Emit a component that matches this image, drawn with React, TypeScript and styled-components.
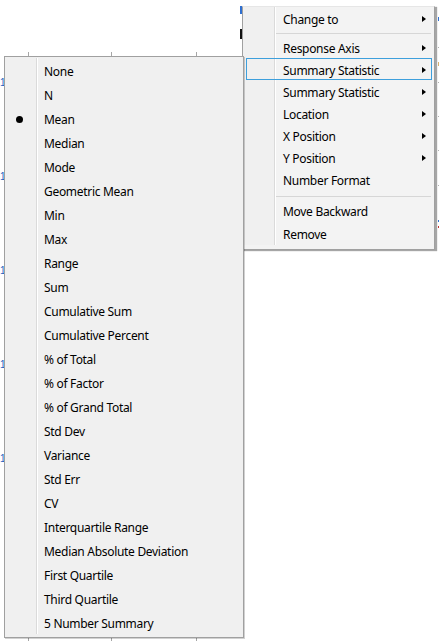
import React from "react";
import styled, { createGlobalStyle } from "styled-components";

const GlobalStyle = createGlobalStyle`
  html, body { margin: 0; padding: 0; background: #ffffff; }
  body { font-family: "Noto Sans", "Liberation Sans", sans-serif; }
`;

const Canvas = styled.div`
  position: relative;
  width: 439px;
  height: 641px;
  background: #ffffff;
  overflow: hidden;
  display: flex;
`;

/* ---------- backdrop chart (behind the menus) ---------- */
const AxisStrip = styled.div`
  width: 4px;
  flex: none;
  display: flex;
  flex-direction: column;
  gap: 82px;
  padding-top: 77px;
`;

const AxisLabel = styled.div`
  height: 12px;
  font-family: "Liberation Sans", sans-serif;
  font-size: 10px;
  line-height: 12px;
  color: #1f5fc0;
  white-space: nowrap;
`;

const PlotArea = styled.div`
  flex: 1;
  display: flex;
  flex-direction: column;
`;

const TitleStrip = styled.div`
  height: 52px;
  flex: none;
  padding-left: 236px;
  display: flex;
  flex-direction: column;
  box-sizing: border-box;
`;

const BlueTick = styled.div`
  width: 2px;
  height: 8px;
  margin-top: 6px;
  background: #2f6fd0;
`;

const TitleMark = styled.div`
  width: 2px;
  height: 10px;
  margin-top: 15px;
  background: #111;
`;

const GridZone = styled.div`
  flex: 1;
  background: linear-gradient(
    90deg,
    transparent 0 24px,
    #a6a6a6 24px 25px,
    transparent 25px 107px,
    #a6a6a6 107px 108px,
    transparent 108px 192px,
    #a6a6a6 192px 193px,
    transparent 193px
  );
`;

const EdgeStrip = styled.div`
  width: 1px;
  flex: none;
  background: linear-gradient(
    180deg,
    #ffffff 0 17px,
    #2f6fd0 17px 21px,
    #ffffff 21px 47px,
    #b0b0b0 47px 48px,
    #ffffff 48px 62px,
    #d8b070 62px 66px,
    #ffffff 66px 82px,
    #b0b0b0 82px 83px,
    #ffffff 83px 116px,
    #b0b0b0 116px 117px,
    #ffffff 117px 150px,
    #b0b0b0 150px 151px,
    #ffffff 151px 185px,
    #b0b0b0 185px 186px,
    #ffffff 186px 220px,
    #2f6fd0 220px 222px,
    #ffffff 222px 226px,
    #c03030 226px 228px,
    #ffffff 228px
  );
`;

/* ---------- menus ---------- */
const ContextMenu = styled.div`
  position: absolute;
  left: 242px;
  top: 6px;
  width: 193px;
  height: 244px;
  box-sizing: border-box;
  border: 1px solid #a0a0a0;
  border-top-color: #e6e6e6;
  background: #f3f3f3;
  box-shadow: 2px 1px 1px rgba(0, 0, 0, 0.35);
  padding: 0 0 4px 0;
  display: flex;
  flex-direction: column;
  z-index: 1;
`;

const SubMenu = styled.div`
  position: absolute;
  left: 4px;
  top: 56px;
  width: 240px;
  height: 582px;
  box-sizing: border-box;
  border: 1px solid #a0a0a0;
  background: #f0f0f0;
  box-shadow: 1px 1px 0 rgba(0, 0, 0, 0.18);
  padding: 1px 0 3px 0;
  display: flex;
  flex-direction: column;
  z-index: 2;
`;

const MenuList = styled.div<{ $bg: string }>`
  flex: 1;
  display: flex;
  flex-direction: column;
  background: linear-gradient(
    90deg,
    #f0f0f0 0 31px,
    #dadada 31px 32px,
    #ffffff 32px 33px,
    ${(p) => p.$bg} 33px
  );
`;

const Row = styled.div<{ $h: number; $active?: boolean }>`
  height: ${(p) => p.$h}px;
  flex: none;
  box-sizing: border-box;
  display: flex;
  align-items: center;
  margin: 0 2px 0 3px;
  padding: 0 5px 0 36px;
  border: 1px solid ${(p) => (p.$active ? "#3d9fdc" : "transparent")};
`;

const StatRow = styled.div`
  height: 24px;
  flex: none;
  display: flex;
  align-items: center;
`;

const CheckCell = styled.div`
  width: 39px;
  flex: none;
  box-sizing: border-box;
  padding: 2px 0 0 11px;
  display: flex;
  align-items: center;
`;

const Bullet = styled.span`
  width: 7px;
  height: 7px;
  border-radius: 50%;
  background: #000;
`;

const Label = styled.span`
  flex: 1;
  font-family: "Noto Sans", "Liberation Sans", sans-serif;
  font-size: 12px;
  letter-spacing: -0.3px;
  color: #000;
  white-space: nowrap;
  padding-top: 2px;
`;

const Arrow = styled.span`
  width: 0;
  height: 0;
  margin-top: 2px;
  border-left: 4px solid #000;
  border-top: 3.5px solid transparent;
  border-bottom: 3.5px solid transparent;
`;

const Separator = styled.div<{ $top: number; $bottom: number }>`
  height: 1px;
  flex: none;
  background: #d6d6d6;
  margin: ${(p) => p.$top}px 3px ${(p) => p.$bottom}px 33px;
`;

type TopItem =
  | { kind: "item"; label: string; sub?: boolean; active?: boolean; h: number }
  | { kind: "sep"; top: number; bottom: number };

const topItems: TopItem[] = [
  { kind: "item", label: "Change to", sub: true, h: 22 },
  { kind: "sep", top: 4, bottom: 2 },
  { kind: "item", label: "Response Axis", sub: true, h: 22 },
  { kind: "item", label: "Summary Statistic", sub: true, active: true, h: 22 },
  { kind: "item", label: "Summary Statistic", sub: true, h: 22 },
  { kind: "item", label: "Location", sub: true, h: 22 },
  { kind: "item", label: "X Position", sub: true, h: 22 },
  { kind: "item", label: "Y Position", sub: true, h: 22 },
  { kind: "item", label: "Number Format", h: 22 },
  { kind: "sep", top: 6, bottom: 2 },
  { kind: "item", label: "Move Backward", h: 23 },
  { kind: "item", label: "Remove", h: 23 },
];

const stats = [
  "None",
  "N",
  "Mean",
  "Median",
  "Mode",
  "Geometric Mean",
  "Min",
  "Max",
  "Range",
  "Sum",
  "Cumulative Sum",
  "Cumulative Percent",
  "% of Total",
  "% of Factor",
  "% of Grand Total",
  "Std Dev",
  "Variance",
  "Std Err",
  "CV",
  "Interquartile Range",
  "Median Absolute Deviation",
  "First Quartile",
  "Third Quartile",
  "5 Number Summary",
];

const selected = "Mean";

export default function App() {
  return (
    <>
      <GlobalStyle />
      <Canvas>
        <AxisStrip>
          {[0, 1, 2, 3, 4].map((i) => (
            <AxisLabel key={i}>1</AxisLabel>
          ))}
        </AxisStrip>
        <PlotArea>
          <TitleStrip>
            <BlueTick />
            <TitleMark />
          </TitleStrip>
          <GridZone />
        </PlotArea>
        <EdgeStrip />

        <ContextMenu>
          <MenuList $bg="#f3f3f3">
            {topItems.map((it, i) =>
              it.kind === "sep" ? (
                <Separator key={i} $top={it.top} $bottom={it.bottom} />
              ) : (
                <Row key={i} $h={it.h} $active={it.active}>
                  <Label>{it.label}</Label>
                  {it.sub && <Arrow />}
                </Row>
              )
            )}
          </MenuList>
        </ContextMenu>

        <SubMenu>
          <MenuList $bg="#f0f0f0">
            {stats.map((s) => (
              <StatRow key={s}>
                <CheckCell>{s === selected && <Bullet />}</CheckCell>
                <Label>{s}</Label>
              </StatRow>
            ))}
          </MenuList>
        </SubMenu>
      </Canvas>
    </>
  );
}
